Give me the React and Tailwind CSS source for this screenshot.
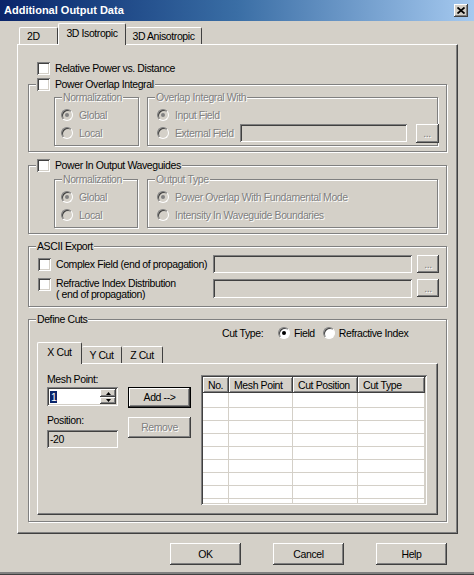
import React from 'react';

// classic win9x bevels
const raised = 'bg-[#d4d0c8] shadow-[inset_-1px_-1px_#404040,inset_1px_1px_#ffffff,inset_-2px_-2px_#808080,inset_2px_2px_#d4d0c8]';
const sunkenGrey = 'bg-[#d4d0c8] shadow-[inset_1px_1px_#808080,inset_-1px_-1px_#ffffff,inset_2px_2px_#404040,inset_-2px_-2px_#d4d0c8]';
const sunkenWhite = 'bg-white shadow-[inset_1px_1px_#808080,inset_-1px_-1px_#ffffff,inset_2px_2px_#404040,inset_-2px_-2px_#d4d0c8]';
const dis = 'text-[#808080] [text-shadow:1px_1px_0_#ffffff]';

const Check = () => <span className={`w-[13px] h-[13px] shrink-0 ${sunkenWhite}`} />;

const Radio = ({ checked, disabled }) => (
  <span
    className={`w-[12px] h-[12px] shrink-0 rounded-full border border-t-[#808080] border-l-[#808080] border-b-white border-r-white shadow-[inset_1px_1px_#404040] flex items-center justify-center ${
      disabled ? 'bg-[#d4d0c8]' : 'bg-white'
    }`}
  >
    {checked && <span className={`w-[4px] h-[4px] rounded-full ${disabled ? 'bg-[#808080]' : 'bg-black'}`} />}
  </span>
);

const Group = ({ legend, className, children, disabled }) => (
  <fieldset className={`border border-[#808080] shadow-[inset_1px_1px_#ffffff,1px_1px_#ffffff] min-w-0 ${className}`}>
    <legend className={`ml-[7px] px-[1px] bg-[#d4d0c8] leading-[13px] whitespace-nowrap ${disabled ? dis : ''}`}>{legend}</legend>
    {children}
  </fieldset>
);

const CheckLegend = ({ label }) => (
  <span className="flex items-center gap-[5px]">
    <Check />
    <span>{label}</span>
  </span>
);

const RadioRow = ({ label, checked, className = '', children }) => (
  <div className={`h-[18px] flex items-center gap-[6px] ${className}`}>
    <Radio checked={checked} disabled />
    <span className={`whitespace-nowrap shrink-0 ${dis}`}>{label}</span>
    {children}
  </div>
);

const Dots = ({ className = '' }) => (
  <div className={`w-[22px] h-[18px] shrink-0 ${raised} flex items-center justify-center ${dis} ${className}`}>...</div>
);

const Button = ({ children, className = '' }) => (
  <div className={`h-[22px] w-[71px] ${raised} flex items-center justify-center ${className}`}>{children}</div>
);

const cols = [
  { w: 'w-[26px]', label: 'No.' },
  { w: 'w-[64px]', label: 'Mesh Point' },
  { w: 'w-[65px]', label: 'Cut Position' },
  { w: 'w-[67px]', label: 'Cut Type' },
];

const rows = ['h-[15px]', 'h-[13px]', 'h-[13px]', 'h-[13px]', 'h-[13px]', 'h-[13px]', 'h-[13px]', 'h-[13px]'];

export default function App() {
  return (
    <div className="w-[474px] h-[575px] overflow-hidden bg-[#d4d0c8] text-black font-['Liberation_Sans',Arial,sans-serif] text-[10.5px] leading-[13px] tracking-[-0.4px] shadow-[inset_0_-1px_#404040,inset_0_-3px_#808080]">
      {/* title bar */}
      <div className="h-[21px] flex items-center pl-[4px] pr-[6px] bg-linear-to-r from-[#0a246a] via-[#3a6ea5] to-[#a6caf0] text-white font-bold text-[11px] tracking-normal">
        <span>Additional Output Data</span>
        <div className={`ml-auto w-[14px] h-[13px] ${raised} flex items-center justify-center`}>
          <svg width="8" height="7" viewBox="0 0 8 7">
            <path d="M0.5 0.5 L7.5 6.5 M7.5 0.5 L0.5 6.5" stroke="#000" strokeWidth="1.8" />
          </svg>
        </div>
      </div>

      {/* outer tabs */}
      <div className="ml-[17px] mt-[2px] h-[21px] flex items-end">
        <div className="ml-[2px] w-[39px] h-[17px] border-t border-l border-white border-r border-r-[#404040] rounded-t-[2px] flex items-center pl-[7px]">2D</div>
        <div className="relative z-10 -mb-px w-[68px] h-[22px] bg-[#d4d0c8] border-t border-l border-white border-r border-r-[#404040] rounded-t-[2px] flex items-center justify-center pb-[2px]">
          3D Isotropic
        </div>
        <div className="w-[76px] h-[17px] border-t border-white border-r border-r-[#404040] rounded-t-[2px] flex items-center justify-center">
          3D Anisotropic
        </div>
      </div>

      {/* outer tab panel */}
      <div className="ml-[17px] w-[441px] h-[490px] border border-t-white border-l-white border-r-[#404040] border-b-[#404040] shadow-[inset_-1px_-1px_#808080] px-[10px]">
        <div className="mt-[17px] h-[13px] flex items-center gap-[5px] pl-[9px]">
          <Check />
          <span>Relative Power vs. Distance</span>
        </div>

        <Group legend={<CheckLegend label="Power Overlap Integral" />} className="mt-[3px] h-[74px]">
          <div className="flex gap-[8px] pl-[25px]">
            <Group legend="Normalization" disabled className="w-[85px] h-[55px]">
              <div className="mt-[2px] pl-[6px]">
                <RadioRow label="Global" checked />
                <RadioRow label="Local" />
              </div>
            </Group>
            <Group legend="Overlap Integral With" disabled className="w-[291px] h-[55px]">
              <div className="mt-[2px] pl-[9px] pr-[6px]">
                <RadioRow label="Input Field" checked />
                <RadioRow label="External Field">
                  <div className={`ml-auto w-[167px] h-[18px] shrink-0 ${sunkenGrey}`} />
                  <Dots className="ml-[3px] w-[23px] h-[19px]" />
                </RadioRow>
              </div>
            </Group>
          </div>
        </Group>

        <Group legend={<CheckLegend label="Power In Output Waveguides" />} className="mt-[7px] h-[75px]">
          <div className="mt-[1px] flex gap-[9px] pl-[25px]">
            <Group legend="Normalization" disabled className="w-[84px] h-[55px]">
              <div className="mt-[2px] pl-[6px]">
                <RadioRow label="Global" checked />
                <RadioRow label="Local" />
              </div>
            </Group>
            <Group legend="Output Type" disabled className="w-[291px] h-[55px]">
              <div className="mt-[2px] pl-[9px]">
                <RadioRow label="Power Overlap With Fundamental Mode" checked />
                <RadioRow label="Intensity In Waveguide Boundaries" />
              </div>
            </Group>
          </div>
        </Group>

        <Group legend="ASCII Export" className="mt-[6px] h-[67px]">
          <div className="pl-[9px] pr-[7px]">
            <div className="mt-[2px] h-[18px] flex items-center gap-[5px]">
              <Check />
              <span className="whitespace-nowrap shrink-0">Complex Field (end of propagation)</span>
              <div className={`ml-auto w-[199px] h-[18px] shrink-0 ${sunkenGrey}`} />
              <Dots />
            </div>
            <div className="mt-[5px] h-[21px] flex items-start gap-[5px]">
              <Check />
              <span className="leading-[11px] whitespace-nowrap shrink-0">
                Refractive Index Distribution
                <br />( end of propagation)
              </span>
              <div className={`ml-auto mt-[1px] w-[199px] h-[19px] shrink-0 ${sunkenGrey}`} />
              <Dots className="mt-[1px]" />
            </div>
          </div>
        </Group>

        <Group legend="Define Cuts" className="mt-[6px] h-[209px]">
          <div className="px-[8px]">
            <div className="h-[14px] flex items-center pl-[185px]">
              <span className="w-[56px]">Cut Type:</span>
              <Radio checked />
              <span className="ml-[4px]">Field</span>
              <span className="ml-[8px]">
                <Radio />
              </span>
              <span className="ml-[4px]">Refractive Index</span>
            </div>

            {/* inner tabs */}
            <div className="mt-[2px] h-[21px] flex items-end">
              <div className="relative z-10 -mb-px w-[45px] h-[22px] bg-[#d4d0c8] border-t border-l border-white border-r border-r-[#404040] rounded-t-[2px] flex items-center justify-center pb-[2px]">
                X Cut
              </div>
              <div className="w-[40px] h-[17px] border-t border-white border-r border-r-[#404040] rounded-t-[2px] flex items-center justify-center">
                Y Cut
              </div>
              <div className="w-[41px] h-[17px] border-t border-white border-r border-r-[#404040] rounded-t-[2px] flex items-center justify-center">
                Z Cut
              </div>
            </div>

            <div className="h-[152px] border border-t-white border-l-white border-r-[#404040] border-b-[#404040] shadow-[inset_-1px_-1px_#808080] flex items-start pl-[9px]">
              <div className="mt-[9px] w-[71px] flex flex-col">
                <span className="h-[13px]">Mesh Point:</span>
                <div className={`mt-[1px] h-[19px] ${sunkenWhite} flex items-center pl-[3px] pr-[2px]`}>
                  <span className="bg-[#0a246a] text-white px-[1px] leading-[12px]">1</span>
                  <div className="ml-auto w-[16px] h-[15px] flex flex-col">
                    <div className={`h-[8px] ${raised} flex items-center justify-center`}>
                      <svg width="5" height="3" viewBox="0 0 5 3"><path d="M2.5 0 L5 3 L0 3 Z" fill="#000" /></svg>
                    </div>
                    <div className={`h-[7px] ${raised} flex items-center justify-center`}>
                      <svg width="5" height="3" viewBox="0 0 5 3"><path d="M0 0 L5 0 L2.5 3 Z" fill="#000" /></svg>
                    </div>
                  </div>
                </div>
                <span className="mt-[8px] h-[13px]">Position:</span>
                <div className={`mt-[3px] h-[18px] ${sunkenGrey} flex items-center pl-[3px]`}>-20</div>
              </div>

              <div className="ml-[10px] mt-[23px] w-[63px] flex flex-col">
                <div className="h-[21px] border border-black">
                  <div className={`h-full ${raised} flex items-center justify-center`}>Add --&gt;</div>
                </div>
                <div className={`mt-[9px] h-[21px] ${raised} flex items-center justify-center ${dis}`}>Remove</div>
              </div>

              <div className={`ml-[10px] mt-[11px] w-[226px] h-[130px] p-[2px] ${sunkenWhite} flex flex-col overflow-hidden`}>
                <div className="flex h-[16px] shrink-0">
                  {cols.map((c) => (
                    <div key={c.label} className={`${c.w} shrink-0 ${raised} flex items-center pl-[5px]`}>
                      {c.label}
                    </div>
                  ))}
                </div>
                {rows.map((h, i) => (
                  <div key={i} className={`flex ${h} shrink-0 border-b border-[#d4d0c8]`}>
                    {cols.map((c) => (
                      <div key={c.label} className={`${c.w} shrink-0 border-r border-[#d4d0c8]`} />
                    ))}
                  </div>
                ))}
                <div className="flex flex-1">
                  {cols.map((c) => (
                    <div key={c.label} className={`${c.w} shrink-0 border-r border-[#d4d0c8]`} />
                  ))}
                </div>
              </div>
            </div>
          </div>
        </Group>
      </div>

      {/* dialog buttons */}
      <div className="mt-[9px] flex justify-end gap-[32px] pr-[27px]">
        <Button>OK</Button>
        <Button>Cancel</Button>
        <Button>Help</Button>
      </div>
    </div>
  );
}
